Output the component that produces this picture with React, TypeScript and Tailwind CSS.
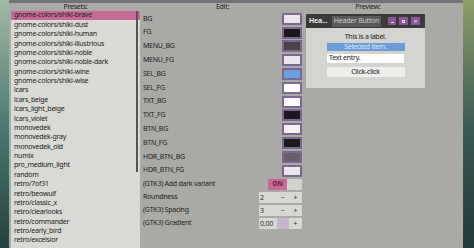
import React from "react";

const PRESETS = [
  "gnome-colors/shiki-brave",
  "gnome-colors/shiki-dust",
  "gnome-colors/shiki-human",
  "gnome-colors/shiki-illustrious",
  "gnome-colors/shiki-noble",
  "gnome-colors/shiki-noble-dark",
  "gnome-colors/shiki-wine",
  "gnome-colors/shiki-wise",
  "lcars",
  "lcars_beige",
  "lcars_light_beige",
  "lcars_violet",
  "monovedek",
  "monovedek-gray",
  "monovedek_old",
  "numix",
  "pro_medium_light",
  "random",
  "retro/7of31",
  "retro/beowulf",
  "retro/classic_x",
  "retro/clearlooks",
  "retro/commander",
  "retro/early_bird",
  "retro/excelsior",
];

const COLORS: { name: string; fill: string }[] = [
  { name: "BG", fill: "bg-[#ece6ed]" },
  { name: "FG", fill: "bg-[#1c1620]" },
  { name: "MENU_BG", fill: "bg-[#4b4249]" },
  { name: "MENU_FG", fill: "bg-[#ece6ed]" },
  { name: "SEL_BG", fill: "bg-[#6e9fe0]" },
  { name: "SEL_FG", fill: "bg-[#ffffff]" },
  { name: "TXT_BG", fill: "bg-[#ffffff]" },
  { name: "TXT_FG", fill: "bg-[#1c1620]" },
  { name: "BTN_BG", fill: "bg-[#f6f1f6]" },
  { name: "BTN_FG", fill: "bg-[#1b1b1b]" },
  { name: "HDR_BTN_BG", fill: "bg-[#6b5c6b]" },
  { name: "HDR_BTN_FG", fill: "bg-[#ece6ed]" },
];

function Spinner({ value, minusOff }: { value: string; minusOff?: boolean }) {
  return (
    <div className="flex h-[11px] w-[43px] text-[7px] leading-none text-[#2b2b2b]">
      <div className="flex w-[18px] items-center bg-[#d7d8d3] pl-[1px]">{value}</div>
      <div
        className={
          minusOff
            ? "flex w-[12px] items-center justify-center bg-[#c6b7cc] text-[#a89aae]"
            : "flex w-[12px] items-center justify-center bg-[#d7d8d3]"
        }
      >
        −
      </div>
      <div className="flex w-[13px] items-center justify-center bg-[#d7d8d3]">+</div>
    </div>
  );
}

export default function App() {
  return (
    <div
      className="flex h-[248px] w-[474px] overflow-hidden tracking-[-0.25px] text-[#222222]"
      style={{ fontFamily: '"Noto Sans", sans-serif' }}
    >
      <div className="w-[9px] shrink-0 bg-gradient-to-b from-[#a3bba3] via-[#4d7a74] to-[#24423f]" />
      <div className="flex h-[248px] w-[454px] shrink-0 flex-col overflow-hidden bg-[#a9aaa5]">
        <div className="h-[3px] shrink-0 bg-[#737276]" />
        <div className="flex min-h-0 flex-1 pl-[2px]">
          {/* presets */}
          <div className="flex w-[129px] flex-col">
            <div className="h-[8px] shrink-0 text-center text-[7px] leading-[8px]">Presets:</div>
            <div className="relative min-h-0 flex-1 overflow-hidden bg-[#d9dad5] text-[7px]">
              {PRESETS.map((p, i) => (
                <div
                  key={p}
                  className={
                    i === 0
                      ? "flex h-[9.375px] items-center bg-[#c66b96] pl-[3px]"
                      : "flex h-[9.375px] items-center pl-[3px]"
                  }
                >
                  {p}
                </div>
              ))}
              <div className="absolute top-[0px] right-[2px] h-[161px] w-[2px] bg-[#555555]" />
            </div>
          </div>

          {/* edit */}
          <div className="ml-[3px] flex w-[159px] flex-col text-[7px]">
            <div className="h-[9px] shrink-0 text-center leading-[8px]">Edit:</div>
            {COLORS.map((c) => (
              <div key={c.name} className="flex h-[13.8px] shrink-0 items-center justify-between">
                <span>{c.name}</span>
                <div className="h-[12px] w-[20px] bg-[#7b6890] p-[2px]">
                  <div className={`h-full w-full ${c.fill}`} />
                </div>
              </div>
            ))}
            <div className="flex h-[13px] shrink-0 items-center justify-between">
              <span>(GTK3) Add dark variant</span>
              <div className="flex h-[11px] w-[34px]">
                <div className="flex w-[19px] items-center justify-center bg-[#c66b96] text-[6.5px] font-bold text-[#6f1d45]">
                  ON
                </div>
                <div className="flex-1 bg-[#d2d3ce]" />
              </div>
            </div>
            <div className="flex h-[13px] shrink-0 items-center justify-between">
              <span>Roundness</span>
              <Spinner value="2" />
            </div>
            <div className="flex h-[13px] shrink-0 items-center justify-between">
              <span>(GTK3) Spacing</span>
              <Spinner value="3" />
            </div>
            <div className="flex h-[13px] shrink-0 items-center justify-between">
              <span>(GTK3) Gradient</span>
              <Spinner value="0.00" minusOff />
            </div>
          </div>

          {/* preview */}
          <div className="flex w-[132px] flex-col text-[7px]">
            <div className="h-[8px] shrink-0 text-center leading-[8px]">Preview:</div>
            <div className="mt-[3px] ml-[4px] flex w-[119px] flex-col">
              <div className="flex h-[14px] items-center bg-[#3b3a3a] pl-[3px]">
                <span className="w-[21px] font-bold text-[#ececec]">Hea...</span>
                <div className="ml-[2px] flex h-[11px] w-[49px] items-center justify-center bg-[#5b5a5a] text-[#c9c9c9]">
                  Header Button
                </div>
                <div className="ml-[7px] flex gap-[3px]">
                  <div className="flex h-[8px] w-[8px] items-end justify-center bg-[#8c559b] pb-[2px]">
                    <div className="h-[1px] w-[3px] bg-[#e8e0ea]" />
                  </div>
                  <div className="flex h-[8px] w-[9px] items-center justify-center bg-[#8c559b]">
                    <div className="h-[3px] w-[3px] border border-[#e8e0ea]" />
                  </div>
                  <div className="flex h-[8px] w-[9px] items-center justify-center bg-[#8c559b] text-[7px] leading-none text-[#e8e0ea]">
                    ×
                  </div>
                </div>
              </div>
              <div className="flex h-[60px] flex-col items-center bg-[#d4d5d0] pt-[4px]">
                <div className="leading-[9px]">This is a label.</div>
                <div className="mt-[2px] flex h-[8px] w-[78px] items-center justify-center bg-[#6c9cd8] text-[#dce7f5]">
                  Selected item.
                </div>
                <div className="mt-[3px] flex h-[9px] w-[77px] items-center bg-white pl-[2px]">
                  Text entry.
                </div>
                <div className="mt-[4px] flex h-[10px] w-[78px] items-center justify-center bg-[#eeeeec]">
                  Click-click
                </div>
              </div>
            </div>
          </div>
        </div>
      </div>
      <div className="flex-1 bg-gradient-to-b from-[#8d9e66] via-[#3c5b55] to-[#20393a]" />
    </div>
  );
}
